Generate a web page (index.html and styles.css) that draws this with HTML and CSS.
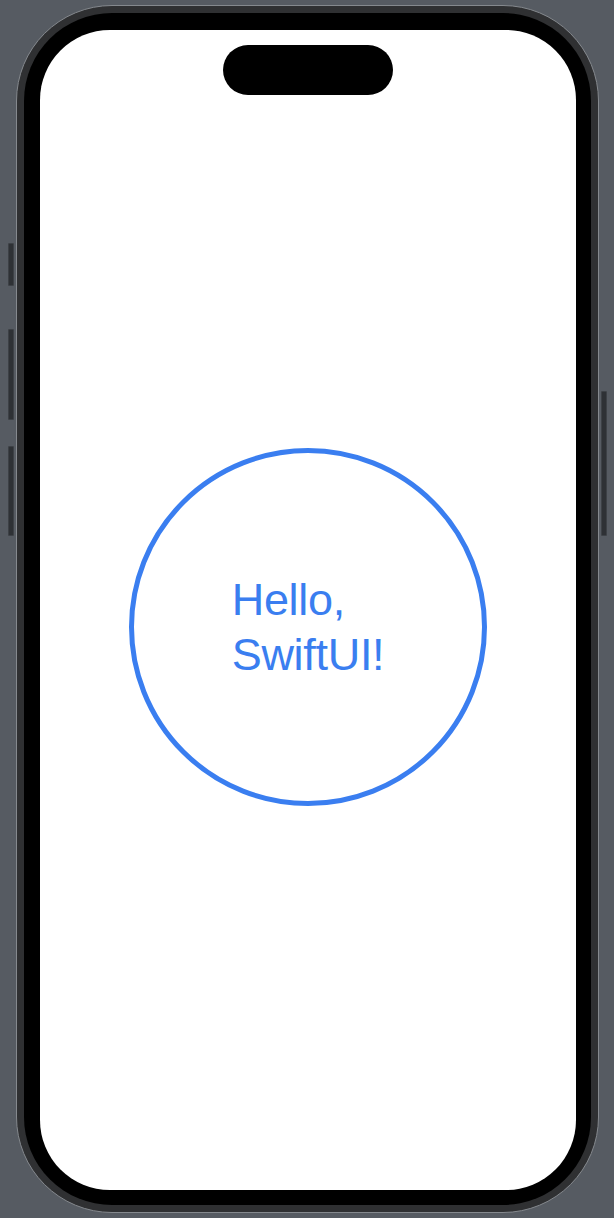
FILE: index.html
```html
<!DOCTYPE html>
<html lang="en">
<head>
<meta charset="utf-8">
<title>Hello, SwiftUI!</title>
<link rel="stylesheet" href="styles.css">
</head>
<body>
<div class="phone">
  <span class="btn btn-action"></span>
  <span class="btn btn-vol-up"></span>
  <span class="btn btn-vol-down"></span>
  <span class="btn btn-power"></span>
  <div class="bezel">
    <div class="screen">
      <div class="island"></div>
      <main class="content">
        <div class="ring">
          <p class="greeting">Hello, SwiftUI!</p>
        </div>
      </main>
    </div>
  </div>
</div>
</body>
</html>
```
FILE: styles.css
```css
html, body {
  margin: 0;
  padding: 0;
}
body {
  background: #565b62;
  width: 614px;
  height: 1218px;
  box-sizing: border-box;
  padding: 5px 15px 5px 16px;
  font-family: "Liberation Sans", Arial, sans-serif;
}
.phone {
  position: relative;
  box-sizing: border-box;
  width: 583px;
  height: 1208px;
  border: 1px solid #85898e;
  border-radius: 96px;
  background: #2f3032;
  padding: 7px;
}
.btn {
  position: absolute;
  width: 6px;
  background: #2e3135;
  border: 1px solid #3d4146;
  box-sizing: border-box;
  border-radius: 1px;
}
.btn-action { left: -9px; top: 237px; height: 43px; }
.btn-vol-up { left: -9px; top: 323px; height: 91px; }
.btn-vol-down { left: -9px; top: 440px; height: 90px; }
.btn-power { right: -9px; top: 385px; height: 145px; }
.bezel {
  box-sizing: border-box;
  height: 100%;
  background: #000;
  border-radius: 88px;
  padding: 17px 15px 15px 16px;
}
.screen {
  box-sizing: border-box;
  height: 100%;
  background: #fff;
  border-radius: 70px;
  padding: 15px 0 46px;
  display: flex;
  flex-direction: column;
  align-items: center;
}
.island {
  width: 170px;
  height: 50px;
  border-radius: 25px;
  background: #000;
  flex: none;
}
.content {
  flex: 1;
  margin-top: 15px;
  display: flex;
  align-items: center;
  justify-content: center;
  align-self: stretch;
}
.ring {
  box-sizing: border-box;
  width: 358px;
  height: 358px;
  border: 5px solid #3a7ef0;
  border-radius: 50%;
  display: flex;
  align-items: center;
  justify-content: center;
}
.greeting {
  margin: 0;
  width: min-content;
  color: #3a7ef0;
  font-size: 45px;
  line-height: 55px;
  letter-spacing: -0.3px;
  text-align: left;
}
```
